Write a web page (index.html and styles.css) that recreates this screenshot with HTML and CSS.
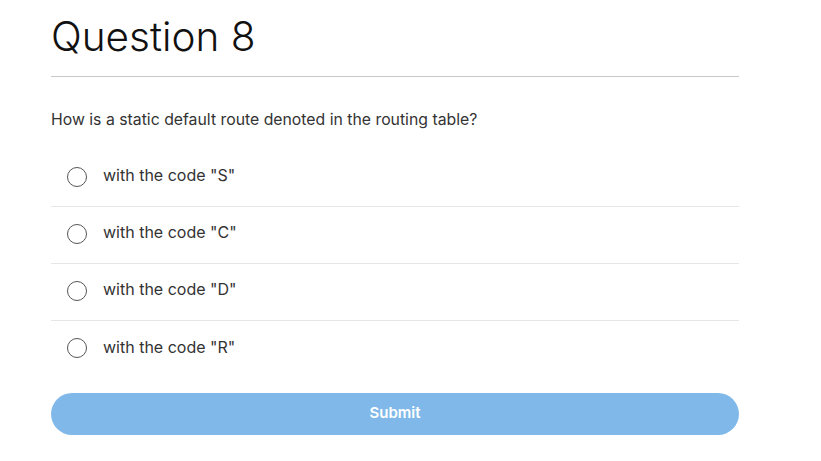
FILE: index.html
```html
<!DOCTYPE html>
<html>
<head>
<meta charset="utf-8">
<link rel="stylesheet" href="styles.css">
</head>
<body>
<main class="quiz">
  <h1 class="title">Question 8</h1>
  <p class="prompt">How is a static default route denoted in the routing table?</p>
  <ul class="options">
    <li class="option"><span class="radio"></span><span class="label">with the code "S"</span></li>
    <li class="option"><span class="radio"></span><span class="label">with the code "C"</span></li>
    <li class="option"><span class="radio"></span><span class="label">with the code "D"</span></li>
    <li class="option"><span class="radio"></span><span class="label">with the code "R"</span></li>
  </ul>
  <button class="submit">Submit</button>
</main>
</body>
</html>
```
FILE: styles.css
```css
html, body {
  margin: 0;
  padding: 0;
  background: #fff;
}
body {
  font-family: Inter, "Liberation Sans", Arial, sans-serif;
  color: #333;
}
.quiz {
  width: 688px;
  margin-left: 51px;
  padding-top: 12px;
}
.title {
  margin: 0;
  font-size: 40.5px;
  font-weight: 300;
  line-height: 50px;
  color: #111;
  padding-bottom: 14px;
  border-bottom: 1px solid #c8c8c8;
}
.prompt {
  margin: 0;
  padding-top: 31px;
  font-size: 15.8px;
  line-height: 24px;
  color: #333;
}
.options {
  list-style: none;
  margin: 0;
  padding: 0;
  margin-top: 18px;
}
.option {
  display: flex;
  align-items: center;
  box-sizing: border-box;
  height: 57px;
  border-bottom: 1px solid #e6e6e6;
  padding-left: 16px;
  padding-bottom: 6px;
}
.option:last-child {
  border-bottom: none;
}
.radio {
  box-sizing: border-box;
  width: 20px;
  height: 20px;
  border: 1.5px solid #555;
  border-radius: 50%;
  flex: none;
  margin-top: 3px;
}
.label {
  margin-left: 16px;
  font-size: 16px;
  color: #333;
}
.submit {
  display: block;
  width: 688px;
  height: 42px;
  margin-top: 15px;
  padding: 0 0 3px;
  border: none;
  border-radius: 21px;
  background: #80b9e9;
  color: #fff;
  font-family: Inter, "Liberation Sans", Arial, sans-serif;
  font-size: 15px;
  font-weight: 600;
}
```
